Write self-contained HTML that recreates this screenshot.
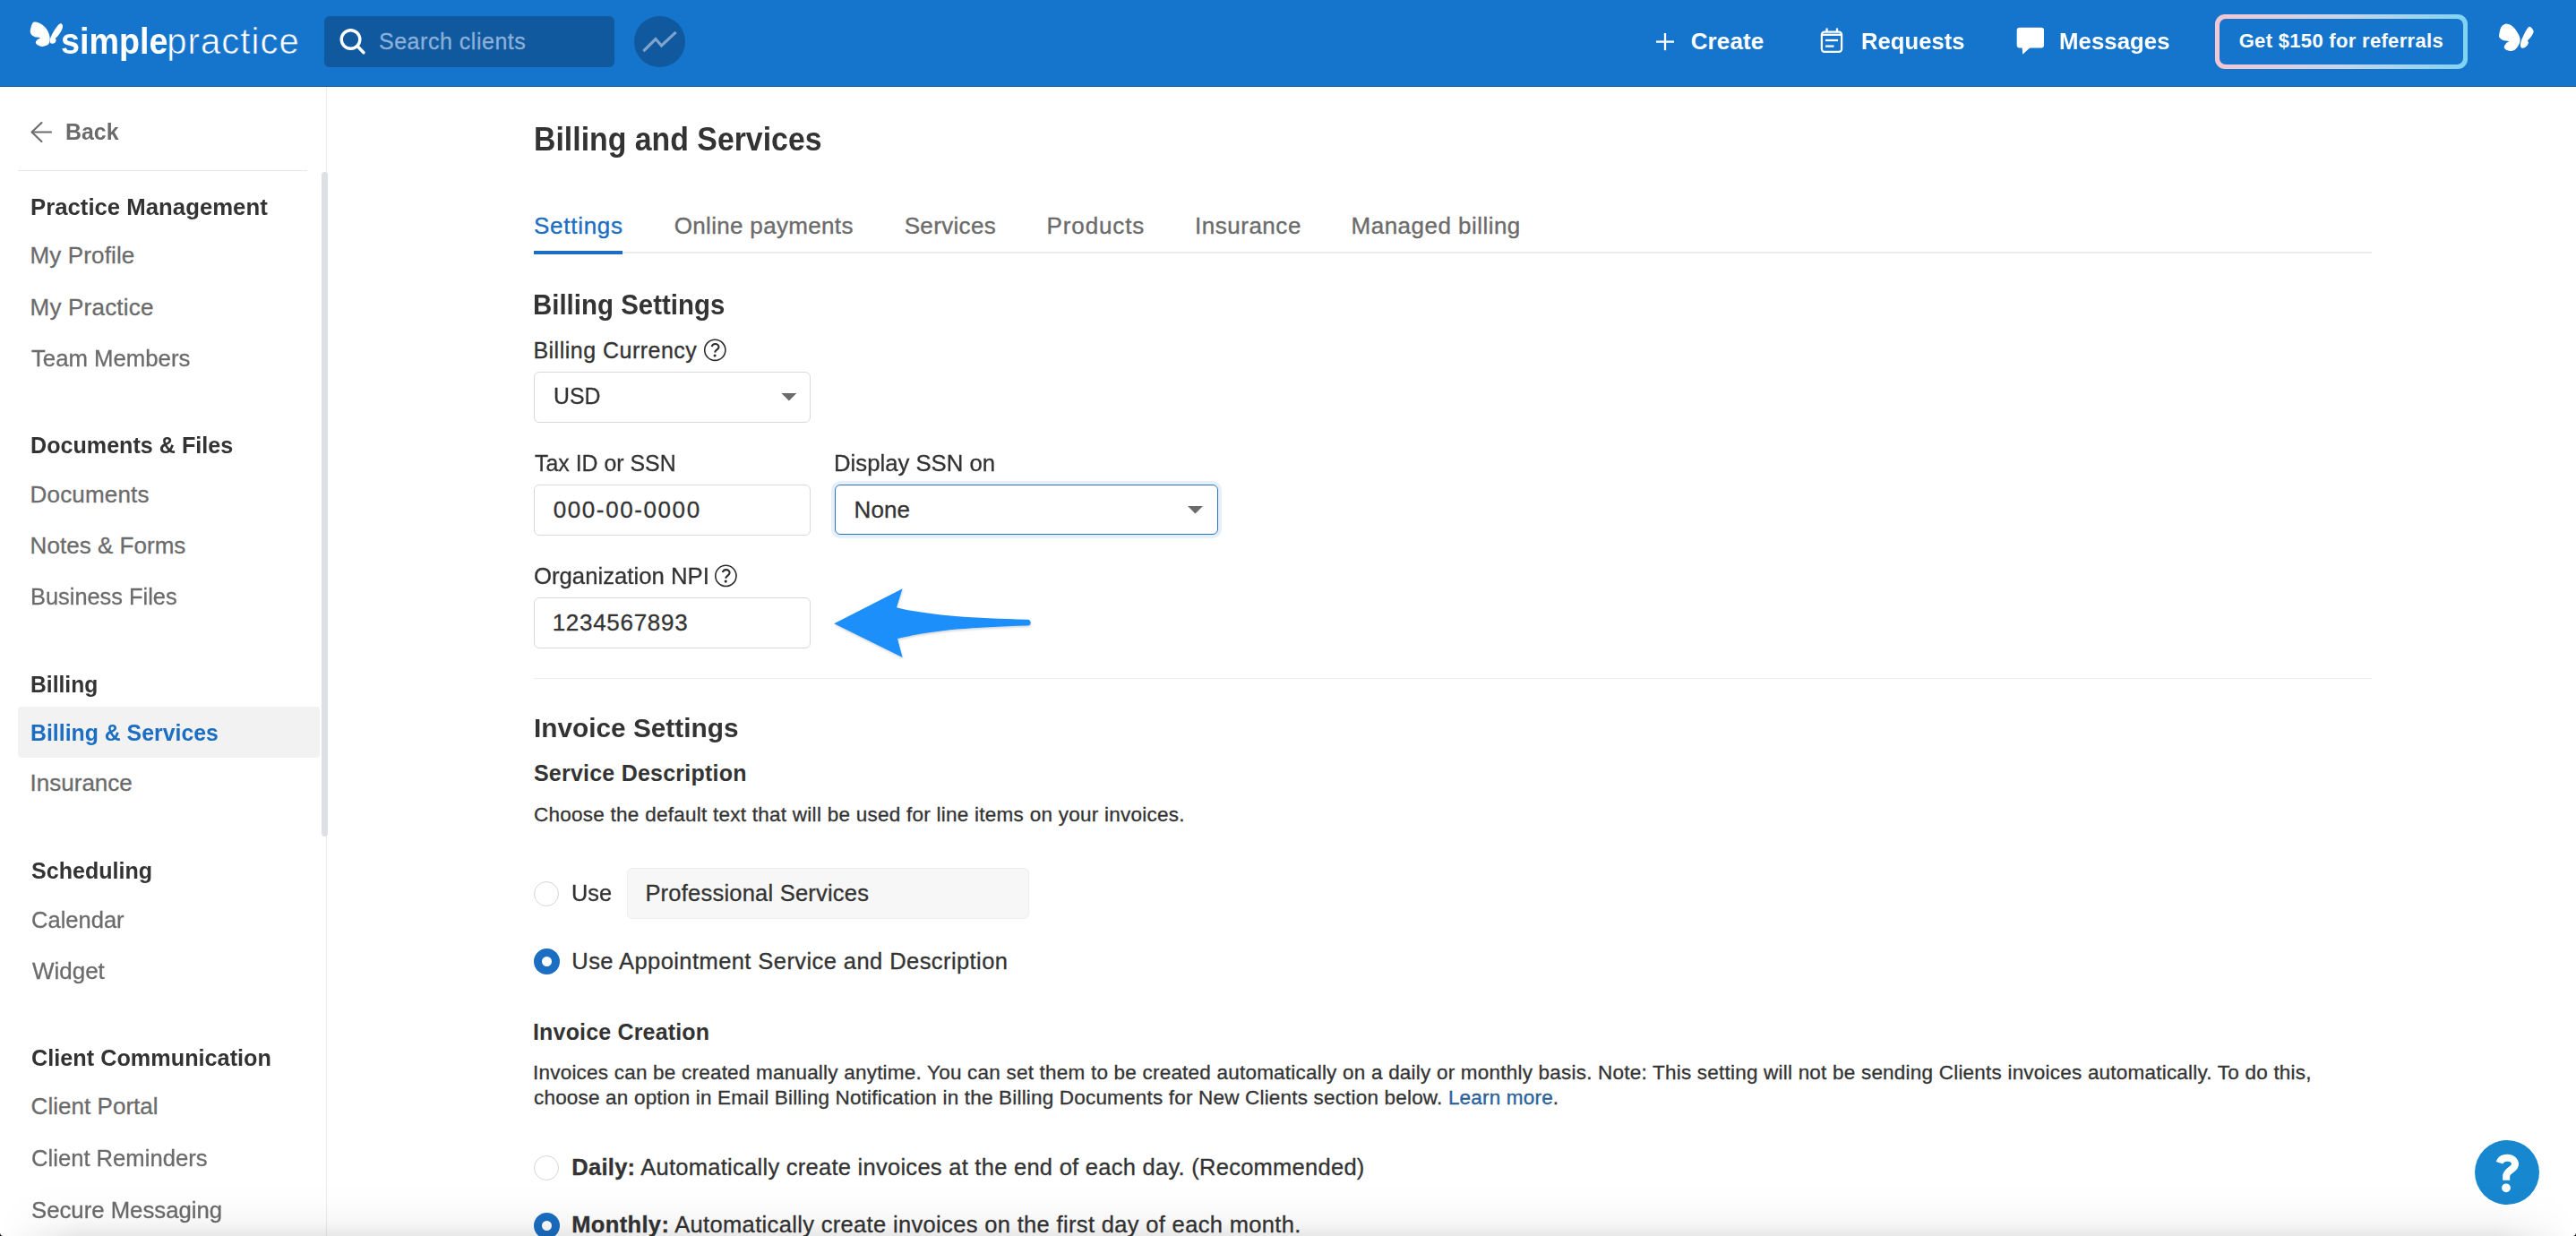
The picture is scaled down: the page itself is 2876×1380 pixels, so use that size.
<!DOCTYPE html>
<html>
<head>
<meta charset="utf-8">
<style>
html,body{margin:0;padding:0;}
body{width:2876px;height:1380px;overflow:hidden;background:#fff;position:relative;font-family:"Liberation Sans", sans-serif;}
.a{position:absolute;box-sizing:border-box;}
.t{position:absolute;white-space:nowrap;transform-origin:0 0;font-family:"Liberation Sans", sans-serif;}
svg{position:absolute;overflow:visible;}
</style>
</head>
<body>
<!-- header -->
<div class="a" style="left:0;top:0;width:2876px;height:97px;background:#1574cc;"></div>
<div class="a" style="left:0;top:96px;width:2876px;height:1px;background:#1a5c9f;"></div>

<!-- logo butterfly -->
<svg style="left:0;top:0" width="80" height="96" viewBox="0 0 80 96">
  <path fill="#fff" d="M33.98,33.06 C34.38,31.26 35.26,27.10 36.42,25.72 C37.59,24.35 39.04,24.41 40.96,24.81 C42.89,25.22 45.97,26.68 47.95,28.17 C49.93,29.66 51.62,31.78 52.84,33.76 C54.07,35.74 54.82,38.19 55.29,40.05 C55.76,41.91 55.81,43.43 55.64,44.94 C55.46,46.45 55.29,48.03 54.24,49.13 C53.19,50.24 50.75,51.14 49.35,51.58 C47.95,52.02 47.25,52.14 45.86,51.79 C44.46,51.44 41.95,50.27 40.96,49.48 C39.97,48.69 39.80,47.91 39.92,47.04 C40.03,46.16 40.85,45.06 41.66,44.24 C42.48,43.43 45.16,42.61 44.81,42.15 C44.46,41.68 41.14,41.97 39.57,41.45 C37.99,40.92 36.31,39.82 35.37,39.00 C34.44,38.19 34.21,37.54 33.98,36.55 C33.74,35.56 33.57,34.87 33.98,33.06 Z"/>
  <path fill="#fff" d="M68.22,26.21 C69.09,26.33 69.85,27.61 69.97,28.87 C70.08,30.13 69.79,31.90 68.92,33.76 C68.04,35.62 65.89,38.53 64.72,40.05 C63.56,41.56 62.28,42.03 61.93,42.84 C61.58,43.66 62.74,44.13 62.63,44.94 C62.51,45.76 62.05,47.10 61.23,47.74 C60.41,48.38 58.61,48.90 57.74,48.78 C56.86,48.67 56.22,48.14 55.99,47.04 C55.76,45.93 55.70,44.13 56.34,42.15 C56.98,40.17 58.43,37.49 59.83,35.16 C61.23,32.83 63.33,29.66 64.72,28.17 C66.12,26.68 67.34,26.10 68.22,26.21 Z"/>
</svg>

<!-- search box -->
<div class="a" style="left:362px;top:18px;width:324px;height:57px;border-radius:6px;background:#10599f;"></div>
<svg style="left:0;top:0" width="420" height="96">
  <circle cx="391.5" cy="44" r="10.3" fill="none" stroke="#fff" stroke-width="3.4"/>
  <line x1="399" y1="51.5" x2="406" y2="58.8" stroke="#fff" stroke-width="3.4" stroke-linecap="round"/>
</svg>

<!-- trend circle -->
<div class="a" style="left:707.5px;top:18px;width:57.5px;height:57px;border-radius:50%;background:#10599f;"></div>
<svg style="left:0;top:0" width="780" height="96">
  <polyline points="719.5,56 732,43.5 738.5,51 753.5,37" fill="none" stroke="#7ea3cd" stroke-width="3.2" stroke-linecap="square" stroke-linejoin="miter"/>
</svg>

<!-- plus -->
<svg style="left:0;top:0" width="2876" height="96">
  <line x1="1849" y1="46.6" x2="1869" y2="46.6" stroke="#fff" stroke-width="2.3"/>
  <line x1="1859" y1="37" x2="1859" y2="56.2" stroke="#fff" stroke-width="2.3"/>
  <!-- calendar -->
  <rect x="2033.9" y="35.6" width="22.2" height="22.2" rx="3" fill="none" stroke="#fff" stroke-width="2.3"/>
  <line x1="2034" y1="38.8" x2="2056" y2="38.8" stroke="#fff" stroke-width="2.3"/>
  <line x1="2039.6" y1="31.5" x2="2039.6" y2="35" stroke="#fff" stroke-width="2.3"/>
  <line x1="2051" y1="31.5" x2="2051" y2="35" stroke="#fff" stroke-width="2.3"/>
  <line x1="2038" y1="45" x2="2052" y2="45" stroke="#fff" stroke-width="2.3"/>
  <line x1="2038" y1="51.6" x2="2047.5" y2="51.6" stroke="#fff" stroke-width="2.3"/>
  <!-- message -->
  <rect x="2251.7" y="30.7" width="30.3" height="22.8" rx="3.2" fill="#fff"/>
  <path d="M2257.6,52.5 L2267.3,52.5 L2258.2,60.8 Z" fill="#fff"/>
  <!-- right butterfly avatar -->
  <path fill="#fff" d="M2790.21,38.83 C2790.48,36.95 2791.09,32.77 2792.23,30.74 C2793.38,28.72 2795.20,27.10 2797.09,26.70 C2798.98,26.29 2801.54,27.10 2803.56,28.32 C2805.58,29.53 2807.61,31.69 2809.22,33.98 C2810.84,36.27 2812.66,39.64 2813.27,42.07 C2813.88,44.50 2813.67,46.39 2812.86,48.54 C2812.06,50.70 2810.10,53.60 2808.41,55.02 C2806.73,56.43 2804.64,57.04 2802.75,57.04 C2800.86,57.04 2798.23,55.89 2797.09,55.02 C2795.94,54.14 2795.60,52.99 2795.87,51.78 C2796.14,50.57 2797.83,48.68 2798.71,47.73 C2799.58,46.79 2801.81,46.59 2801.13,46.12 C2800.46,45.64 2796.41,45.58 2794.66,44.90 C2792.91,44.23 2791.36,43.08 2790.61,42.07 C2789.87,41.06 2789.94,40.72 2790.21,38.83 Z"/>
  <path fill="#fff" d="M2825.00,29.94 C2826.08,30.54 2828.44,33.04 2828.64,34.79 C2828.84,36.54 2827.29,38.70 2826.21,40.45 C2825.13,42.21 2822.71,44.09 2822.17,45.31 C2821.63,46.52 2823.25,46.66 2822.98,47.73 C2822.71,48.81 2821.63,50.77 2820.55,51.78 C2819.47,52.79 2817.58,53.80 2816.50,53.80 C2815.43,53.80 2814.35,53.20 2814.08,51.78 C2813.81,50.36 2814.08,47.87 2814.89,45.31 C2815.70,42.75 2817.72,38.77 2818.93,36.41 C2820.15,34.05 2821.16,32.23 2822.17,31.15 C2823.18,30.07 2823.92,29.33 2825.00,29.94 Z"/>
</svg>

<!-- referral button -->
<div class="a" style="left:2473px;top:16px;width:282px;height:61px;border-radius:11px;background:linear-gradient(90deg,#f4c6d3 0%,#c9d6ea 50%,#7fd3f3 100%);"></div>
<div class="a" style="left:2478px;top:21px;width:272px;height:51px;border-radius:7px;background:#1574cc;"></div>

<!-- sidebar -->
<div class="a" style="left:364px;top:97px;width:1px;height:1283px;background:#ececec;"></div>
<svg style="left:0;top:0" width="80" height="200">
  <polyline points="46.5,137 35.5,147.5 46.5,158" fill="none" stroke="#6b6b6b" stroke-width="2.1" stroke-linecap="round" stroke-linejoin="round"/>
  <line x1="36" y1="147.5" x2="57" y2="147.5" stroke="#6b6b6b" stroke-width="2.1" stroke-linecap="round"/>
</svg>
<div class="a" style="left:20px;top:190px;width:323px;height:1px;background:#e6e6e6;"></div>
<div class="a" style="left:359px;top:192px;width:7px;height:742px;border-radius:4px;background:#dde0e4;"></div>
<div class="a" style="left:20px;top:789px;width:337px;height:57px;border-radius:4px;background:#f2f2f2;"></div>

<!-- main -->
<div class="a" style="left:596px;top:281px;width:2052px;height:2px;background:#ececec;"></div>
<div class="a" style="left:596px;top:279.5px;width:99px;height:4px;background:#1b6ec2;"></div>

<!-- help icons -->
<svg style="left:0;top:0" width="900" height="700">
  <g transform="translate(0,0)">
    <circle cx="798.3" cy="390.8" r="11.6" fill="none" stroke="#2b2b2b" stroke-width="1.6"/>
    <path d="M794.7,387 C795.2,384.9 796.7,384 798.5,384 C800.8,384 802.5,385.5 802.5,387.5 C802.5,390.3 798.2,390.6 798.2,393.6" fill="none" stroke="#2b2b2b" stroke-width="2.1" stroke-linecap="butt"/>
    <circle cx="798.1" cy="397" r="1.55" fill="#2b2b2b"/>
  </g>
  <g transform="translate(12.1,252.1)">
    <circle cx="798.3" cy="390.8" r="11.6" fill="none" stroke="#2b2b2b" stroke-width="1.6"/>
    <path d="M794.7,387 C795.2,384.9 796.7,384 798.5,384 C800.8,384 802.5,385.5 802.5,387.5 C802.5,390.3 798.2,390.6 798.2,393.6" fill="none" stroke="#2b2b2b" stroke-width="2.1" stroke-linecap="butt"/>
    <circle cx="798.1" cy="397" r="1.55" fill="#2b2b2b"/>
  </g>
</svg>

<!-- inputs -->
<div class="a" style="left:595.9px;top:415.2px;width:308.9px;height:56.8px;border:1.6px solid #d9d9d9;border-radius:6px;"></div>
<div class="a" style="left:595.9px;top:541.1px;width:308.9px;height:56.8px;border:1.6px solid #d9d9d9;border-radius:6px;"></div>
<div class="a" style="left:595.9px;top:666.8px;width:308.9px;height:56.8px;border:1.6px solid #d9d9d9;border-radius:6px;"></div>
<div class="a" style="left:931.7px;top:541.3px;width:428px;height:56px;border:1.7px solid #2b72c2;border-radius:6px;box-shadow:0 0 0 4px #e6f0fb;"></div>
<svg style="left:0;top:0" width="1400" height="700">
  <path d="M872.4,439 L889.4,439 L880.9,447.6 Z" fill="#6b6b6b"/>
  <path d="M1326,565 L1343,565 L1334.5,573.6 Z" fill="#6b6b6b"/>
</svg>

<!-- blue annotation arrow -->
<svg style="left:0;top:0" width="1200" height="760">
  <defs>
    <filter id="sh" x="-10%" y="-30%" width="120%" height="160%">
      <feDropShadow dx="0.5" dy="1.5" stdDeviation="1.2" flood-color="#000" flood-opacity="0.18"/>
    </filter>
  </defs>
  <path filter="url(#sh)" fill="#1e8ffa" d="M931.2,696.2 L1007.6,657.2 L1001,678.2 C1030,686 1080,690.5 1147.3,691.8 C1151.8,692 1151.8,698.4 1147.3,698.6 C1080,700.5 1040,704 1002,713.1 L1007.6,734.1 Z"/>
</svg>

<div class="a" style="left:596px;top:756.5px;width:2052px;height:1.5px;background:#ececec;"></div>

<!-- radios -->
<div class="a" style="left:596px;top:984px;width:28px;height:28px;border-radius:50%;border:1.8px solid #d6d6d6;background:#fff;"></div>
<div class="a" style="left:700.2px;top:969.2px;width:449.3px;height:57.1px;border-radius:6px;border:1px solid #ededed;background:#f7f7f7;"></div>
<div class="a" style="left:595.5px;top:1059px;width:29px;height:29px;border-radius:50%;border:9px solid #1b6ec2;background:#fff;"></div>
<div class="a" style="left:596px;top:1290px;width:28px;height:28px;border-radius:50%;border:1.8px solid #d6d6d6;background:#fff;"></div>
<div class="a" style="left:595.5px;top:1354px;width:29px;height:29px;border-radius:50%;border:9px solid #1b6ec2;background:#fff;"></div>

<div class='t' style='left:67.92px;top:26.14px;font-size:40px;line-height:40px;font-weight:700;color:#ffffff;transform:scaleX(0.9419);'>simple</div>
<div class='t' style='left:186.30px;top:26.14px;font-size:40px;line-height:40px;font-weight:400;color:#ffffff;letter-spacing:1.057px;-webkit-text-stroke:0.6px #1574cc;'>practice</div>
<div class='t' style='left:423.00px;top:33.64px;font-size:25px;line-height:25px;font-weight:400;color:#8bb0d9;letter-spacing:0.523px;-webkit-text-stroke:0.3px #8bb0d9;'>Search clients</div>
<div class='t' style='left:1887.70px;top:33.09px;font-size:26px;line-height:26px;font-weight:700;color:#ffffff;letter-spacing:0.120px;'>Create</div>
<div class='t' style='left:2077.53px;top:33.09px;font-size:26px;line-height:26px;font-weight:700;color:#ffffff;transform:scaleX(0.9868);'>Requests</div>
<div class='t' style='left:2298.71px;top:33.09px;font-size:26px;line-height:26px;font-weight:700;color:#ffffff;transform:scaleX(0.9942);'>Messages</div>
<div class='t' style='left:2499.70px;top:35.28px;font-size:22px;line-height:22px;font-weight:700;color:#ffffff;letter-spacing:0.314px;'>Get $150 for referrals</div>
<div class='t' style='left:73.38px;top:133.89px;font-size:26px;line-height:26px;font-weight:700;color:#6b6b6b;transform:scaleX(0.9583);'>Back</div>
<div class='t' style='left:33.62px;top:217.99px;font-size:26px;line-height:26px;font-weight:700;color:#333333;transform:scaleX(0.9902);'>Practice Management</div>
<div class='t' style='left:33.60px;top:272.39px;font-size:26px;line-height:26px;font-weight:400;color:#6b6b6b;letter-spacing:0.122px;-webkit-text-stroke:0.3px #6b6b6b;'>My Profile</div>
<div class='t' style='left:33.60px;top:329.99px;font-size:26px;line-height:26px;font-weight:400;color:#6b6b6b;letter-spacing:0.200px;-webkit-text-stroke:0.3px #6b6b6b;'>My Practice</div>
<div class='t' style='left:34.60px;top:386.99px;font-size:26px;line-height:26px;font-weight:400;color:#6b6b6b;transform:scaleX(0.9899);-webkit-text-stroke:0.3px #6b6b6b;'>Team Members</div>
<div class='t' style='left:33.67px;top:483.79px;font-size:26px;line-height:26px;font-weight:700;color:#333333;transform:scaleX(0.9662);'>Documents &amp; Files</div>
<div class='t' style='left:33.60px;top:538.99px;font-size:26px;line-height:26px;font-weight:400;color:#6b6b6b;letter-spacing:0.175px;-webkit-text-stroke:0.3px #6b6b6b;'>Documents</div>
<div class='t' style='left:33.60px;top:595.79px;font-size:26px;line-height:26px;font-weight:400;color:#6b6b6b;letter-spacing:0.033px;-webkit-text-stroke:0.3px #6b6b6b;'>Notes &amp; Forms</div>
<div class='t' style='left:33.65px;top:653.29px;font-size:26px;line-height:26px;font-weight:400;color:#6b6b6b;transform:scaleX(0.9764);-webkit-text-stroke:0.3px #6b6b6b;'>Business Files</div>
<div class='t' style='left:33.71px;top:750.59px;font-size:26px;line-height:26px;font-weight:700;color:#333333;transform:scaleX(0.9474);'>Billing</div>
<div class='t' style='left:33.69px;top:804.99px;font-size:26px;line-height:26px;font-weight:700;color:#1b6ec2;transform:scaleX(0.9553);'>Billing &amp; Services</div>
<div class='t' style='left:33.60px;top:861.39px;font-size:26px;line-height:26px;font-weight:400;color:#6b6b6b;-webkit-text-stroke:0.3px #6b6b6b;'>Insurance</div>
<div class='t' style='left:34.64px;top:959.39px;font-size:26px;line-height:26px;font-weight:700;color:#333333;transform:scaleX(0.9638);'>Scheduling</div>
<div class='t' style='left:34.62px;top:1013.99px;font-size:26px;line-height:26px;font-weight:400;color:#6b6b6b;transform:scaleX(0.9817);-webkit-text-stroke:0.3px #6b6b6b;'>Calendar</div>
<div class='t' style='left:35.60px;top:1070.99px;font-size:26px;line-height:26px;font-weight:400;color:#6b6b6b;transform:scaleX(0.9988);-webkit-text-stroke:0.3px #6b6b6b;'>Widget</div>
<div class='t' style='left:34.63px;top:1167.79px;font-size:26px;line-height:26px;font-weight:700;color:#333333;transform:scaleX(0.9711);'>Client Communication</div>
<div class='t' style='left:34.60px;top:1221.79px;font-size:26px;line-height:26px;font-weight:400;color:#6b6b6b;letter-spacing:0.033px;-webkit-text-stroke:0.3px #6b6b6b;'>Client Portal</div>
<div class='t' style='left:34.61px;top:1280.19px;font-size:26px;line-height:26px;font-weight:400;color:#6b6b6b;transform:scaleX(0.9854);-webkit-text-stroke:0.3px #6b6b6b;'>Client Reminders</div>
<div class='t' style='left:34.61px;top:1337.99px;font-size:26px;line-height:26px;font-weight:400;color:#6b6b6b;transform:scaleX(0.9897);-webkit-text-stroke:0.3px #6b6b6b;'>Secure Messaging</div>
<div class='t' style='left:595.52px;top:137.53px;font-size:36px;line-height:36px;font-weight:700;color:#333333;transform:scaleX(0.9398);'>Billing and Services</div>
<div class='t' style='left:596.00px;top:238.99px;font-size:26px;line-height:26px;font-weight:400;color:#1b6ec2;letter-spacing:0.729px;-webkit-text-stroke:0.35px #1b6ec2;'>Settings</div>
<div class='t' style='left:752.70px;top:238.99px;font-size:26px;line-height:26px;font-weight:400;color:#6b6b6b;letter-spacing:0.329px;-webkit-text-stroke:0.35px #6b6b6b;'>Online payments</div>
<div class='t' style='left:1009.70px;top:238.99px;font-size:26px;line-height:26px;font-weight:400;color:#6b6b6b;letter-spacing:0.329px;-webkit-text-stroke:0.35px #6b6b6b;'>Services</div>
<div class='t' style='left:1168.60px;top:238.99px;font-size:26px;line-height:26px;font-weight:400;color:#6b6b6b;letter-spacing:0.871px;-webkit-text-stroke:0.35px #6b6b6b;'>Products</div>
<div class='t' style='left:1333.90px;top:238.99px;font-size:26px;line-height:26px;font-weight:400;color:#6b6b6b;letter-spacing:0.537px;-webkit-text-stroke:0.35px #6b6b6b;'>Insurance</div>
<div class='t' style='left:1508.60px;top:238.99px;font-size:26px;line-height:26px;font-weight:400;color:#6b6b6b;letter-spacing:0.471px;-webkit-text-stroke:0.35px #6b6b6b;'>Managed billing</div>
<div class='t' style='left:595.27px;top:325.18px;font-size:30.5px;line-height:30.5px;font-weight:700;color:#333333;transform:scaleX(0.9653);'>Billing Settings</div>
<div class='t' style='left:595.40px;top:378.64px;font-size:25px;line-height:25px;font-weight:400;color:#333333;letter-spacing:0.493px;-webkit-text-stroke:0.3px #333333;'>Billing Currency</div>
<div class='t' style='left:617.59px;top:429.49px;font-size:26px;line-height:26px;font-weight:400;color:#333333;transform:scaleX(0.9558);-webkit-text-stroke:0.3px #333333;'>USD</div>
<div class='t' style='left:597.00px;top:503.99px;font-size:26px;line-height:26px;font-weight:400;color:#333333;transform:scaleX(0.9571);-webkit-text-stroke:0.3px #333333;'>Tax ID or SSN</div>
<div class='t' style='left:930.72px;top:503.99px;font-size:26px;line-height:26px;font-weight:400;color:#333333;transform:scaleX(0.9888);-webkit-text-stroke:0.3px #333333;'>Display SSN on</div>
<div class='t' style='left:617.70px;top:555.79px;font-size:26px;line-height:26px;font-weight:400;color:#333333;letter-spacing:1.600px;-webkit-text-stroke:0.3px #333333;'>000-00-0000</div>
<div class='t' style='left:953.50px;top:555.79px;font-size:26px;line-height:26px;font-weight:400;color:#333333;letter-spacing:0.100px;-webkit-text-stroke:0.3px #333333;'>None</div>
<div class='t' style='left:596.01px;top:629.79px;font-size:26px;line-height:26px;font-weight:400;color:#333333;transform:scaleX(0.9892);-webkit-text-stroke:0.3px #333333;'>Organization NPI</div>
<div class='t' style='left:616.70px;top:681.99px;font-size:26px;line-height:26px;font-weight:400;color:#333333;letter-spacing:0.700px;-webkit-text-stroke:0.3px #333333;'>1234567893</div>
<div class='t' style='left:595.61px;top:797.61px;font-size:30px;line-height:30px;font-weight:700;color:#333333;transform:scaleX(0.9930);'>Invoice Settings</div>
<div class='t' style='left:595.90px;top:850.84px;font-size:25px;line-height:25px;font-weight:700;color:#333333;letter-spacing:0.228px;'>Service Description</div>
<div class='t' style='left:596.00px;top:898.65px;font-size:22.5px;line-height:22.5px;font-weight:400;color:#333333;letter-spacing:0.256px;-webkit-text-stroke:0.3px #333333;'>Choose the default text that will be used for line items on your invoices.</div>
<div class='t' style='left:638.31px;top:985.41px;font-size:25.5px;line-height:25.5px;font-weight:400;color:#333333;transform:scaleX(0.9930);-webkit-text-stroke:0.3px #333333;'>Use</div>
<div class='t' style='left:720.40px;top:985.41px;font-size:25.5px;line-height:25.5px;font-weight:400;color:#333333;letter-spacing:0.220px;-webkit-text-stroke:0.3px #333333;'>Professional Services</div>
<div class='t' style='left:638.30px;top:1061.41px;font-size:25.5px;line-height:25.5px;font-weight:400;color:#333333;letter-spacing:0.424px;-webkit-text-stroke:0.3px #333333;'>Use Appointment Service and Description</div>
<div class='t' style='left:595.00px;top:1139.84px;font-size:25px;line-height:25px;font-weight:700;color:#333333;letter-spacing:0.173px;'>Invoice Creation</div>
<div class='t' style='left:595.00px;top:1186.95px;font-size:22.5px;line-height:22.5px;font-weight:400;color:#333333;letter-spacing:0.213px;-webkit-text-stroke:0.3px #333333;'>Invoices can be created manually anytime. You can set them to be created automatically on a daily or monthly basis. Note: This setting will not be sending Clients invoices automatically. To do this,</div>
<div class='t' style='left:596.00px;top:1214.95px;font-size:22.5px;line-height:22.5px;font-weight:400;color:#333333;letter-spacing:0.186px;-webkit-text-stroke:0.3px #333333;'>choose an option in Email Billing Notification in the Billing Documents for New Clients section below. <span style="color:#1b6ec2">Learn more</span>.</div>
<div class='t' style='left:638.30px;top:1291.41px;font-size:25.5px;line-height:25.5px;font-weight:400;color:#333333;letter-spacing:0.267px;-webkit-text-stroke:0.3px #333333;'><b>Daily:</b> Automatically create invoices at the end of each day. (Recommended)</div>
<div class='t' style='left:638.30px;top:1355.41px;font-size:25.5px;line-height:25.5px;font-weight:400;color:#333333;letter-spacing:0.336px;-webkit-text-stroke:0.3px #333333;'><b>Monthly:</b> Automatically create invoices on the first day of each month.</div>

<!-- help floating button -->
<div class="a" style="left:2763px;top:1273px;width:72px;height:72px;border-radius:50%;background:#1787cf;"></div>
<svg style="left:0;top:0" width="2876" height="1380">
  <path d="M2790.6,1298.2 C2791.8,1294.6 2795,1292.7 2799.3,1292.7 C2804.3,1292.7 2808,1295.7 2808,1299.9 C2808,1305.8 2798.2,1306.5 2798.2,1313.5 L2798.2,1317.8" fill="none" stroke="#fff" stroke-width="8" stroke-linecap="butt" stroke-linejoin="round"/>
  <circle cx="2798" cy="1326.3" r="4.9" fill="#fff"/>
</svg>

<!-- window corners -->
<svg style="left:0;top:0" width="2876" height="1380">
  <path d="M0,1376.5 Q0.4,1379.6 3.5,1380 L0,1380 Z" fill="#000"/>
  <path d="M2876,1376.5 Q2875.6,1379.6 2872.5,1380 L2876,1380 Z" fill="#000"/>
</svg>
<!-- bottom fade -->
<div class="a" style="left:0;top:1322px;width:2876px;height:58px;background:linear-gradient(180deg,rgba(0,0,0,0) 0%,rgba(0,0,0,0.012) 45%,rgba(0,0,0,0.035) 75%,rgba(0,0,0,0.095) 100%);-webkit-mask-image:linear-gradient(90deg,transparent 0px,#000 90px,#000 2786px,transparent 2876px);mask-image:linear-gradient(90deg,transparent 0px,#000 90px,#000 2786px,transparent 2876px);"></div>
</body>
</html>
